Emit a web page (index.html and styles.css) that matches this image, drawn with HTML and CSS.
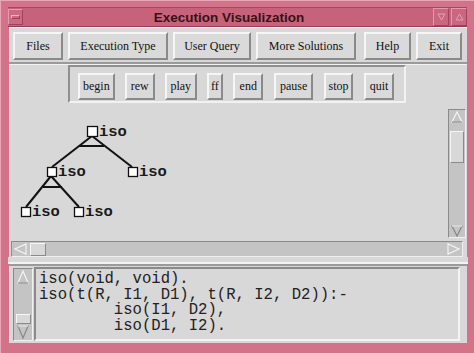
FILE: index.html
```html
<!DOCTYPE html>
<html>
<head>
<meta charset="utf-8">
<link rel="stylesheet" href="styles.css">
</head>
<body>
<div class="window">
  <div class="titlebar">
    <div class="sysbtn"><span class="sysbar"></span></div>
    <div class="title">Execution Visualization</div>
    <div class="tbtn"><svg width="9" height="8" viewBox="0 0 9 8"><path d="M1 1 L8 1 L4.5 7 Z" fill="none" stroke="#e6a0b2" stroke-width="1"/></svg></div>
    <div class="tbtn"><svg width="9" height="8" viewBox="0 0 9 8"><path d="M1 7 L8 7 L4.5 1 Z" fill="none" stroke="#e6a0b2" stroke-width="1"/></svg></div>
  </div>
  <div class="content">
    <div class="menubar">
      <button class="btn m-files">Files</button>
      <button class="btn m-exec">Execution Type</button>
      <button class="btn m-query">User Query</button>
      <button class="btn m-more">More Solutions</button>
      <button class="btn m-help">Help</button>
      <button class="btn m-exit">Exit</button>
    </div>
    <div class="sep"></div>
    <div class="controls">
      <button class="btn cb c-begin">begin</button>
      <button class="btn cb c-rew">rew</button>
      <button class="btn cb c-play">play</button>
      <button class="btn cb c-ff">ff</button>
      <button class="btn cb c-end">end</button>
      <button class="btn cb c-pause">pause</button>
      <button class="btn cb c-stop">stop</button>
      <button class="btn cb c-quit">quit</button>
    </div>
    <div class="canvasrow">
      <div class="canvas">
        <svg class="tree" width="200" height="120" viewBox="0 0 200 120">
          <g stroke="#111" stroke-width="2" fill="none">
            <line x1="82" y1="23" x2="42" y2="54"/>
            <line x1="82" y1="23" x2="122" y2="54"/>
            <line x1="69" y1="33" x2="94" y2="33"/>
            <line x1="41" y1="63" x2="16" y2="94"/>
            <line x1="41" y1="63" x2="69" y2="94"/>
            <line x1="33" y1="74" x2="52" y2="74"/>
          </g>
          <g fill="#fff" stroke="#111" stroke-width="1.3">
            <rect x="77.5" y="13.5" width="10" height="10"/>
            <rect x="37.5" y="54.5" width="9" height="9"/>
            <rect x="118.5" y="54.5" width="9" height="9"/>
            <rect x="11.5" y="94.5" width="9" height="9"/>
            <rect x="64.5" y="94.5" width="9" height="9"/>
          </g>
          <g class="tlabel">
            <text x="89" y="23">iso</text>
            <text x="48" y="63">iso</text>
            <text x="129" y="63">iso</text>
            <text x="22" y="103">iso</text>
            <text x="75" y="103">iso</text>
          </g>
        </svg>
      </div>
      <div class="vscroll">
        <div class="arrow"><svg width="14" height="12" viewBox="0 0 14 12"><path d="M2 11 L12 11 L7 1 Z" fill="none" stroke="#f4f4f4" stroke-width="1.2"/><path d="M2 11 L12 11" stroke="#888" stroke-width="1.2"/></svg></div>
        <div class="vthumb"></div>
        <div class="vfill"></div>
        <div class="arrow"><svg width="14" height="12" viewBox="0 0 14 12"><path d="M2 1 L12 1 L7 11 Z" fill="none" stroke="#888" stroke-width="1.2"/><path d="M2 1 L12 1" stroke="#f4f4f4" stroke-width="1.2"/></svg></div>
      </div>
    </div>
    <div class="hscroll">
      <div class="harrow"><svg width="14" height="12" viewBox="0 0 14 12"><path d="M13 1 L13 11 L2 6 Z" fill="none" stroke="#f4f4f4" stroke-width="1.2"/></svg></div>
      <div class="hthumb"></div>
      <div class="hfill"></div>
      <div class="harrow"><svg width="14" height="12" viewBox="0 0 14 12"><path d="M1 1 L1 11 L12 6 Z" fill="none" stroke="#f4f4f4" stroke-width="1.2"/></svg></div>
    </div>
    <div class="sep2"></div>
    <div class="bottom">
      <div class="lscroll">
        <div class="larrow"><svg width="14" height="14" viewBox="0 0 14 14"><path d="M2 13 L12 13 L7 1 Z" fill="none" stroke="#f4f4f4" stroke-width="1.2"/><path d="M2 13 L12 13" stroke="#888" stroke-width="1.2"/></svg></div>
        <div class="lfill"></div>
        <div class="lthumb"></div>
        <div class="larrow"><svg width="14" height="14" viewBox="0 0 14 14"><path d="M2 1 L12 1 L7 13 Z" fill="none" stroke="#888" stroke-width="1.2"/><path d="M2 1 L12 1" stroke="#f4f4f4" stroke-width="1.2"/></svg></div>
      </div>
      <pre class="code">iso(void, void).
iso(t(R, I1, D1), t(R, I2, D2)):-
        iso(I1, D2),
        iso(D1, I2).</pre>
    </div>
  </div>
</div>
</body>
</html>
```

FILE: styles.css
```css
* { box-sizing: border-box; }
html, body { margin: 0; padding: 0; }
body {
  width: 474px;
  height: 353px;
  background: #c9687f;
  overflow: hidden;
  font-family: "Liberation Serif", "Times New Roman", serif;
}
.window {
  width: 474px;
  height: 353px;
  padding: 6px 7px 10px 8px;
  background: #d27389;
  border-top: 1px solid #e9a6b6;
  border-left: 1px solid #e9a6b6;
  display: flex;
  flex-direction: column;
}
.titlebar {
  height: 20px;
  flex: 0 0 20px;
  display: flex;
  align-items: center;
  background: #c6637b;
  border-top: 1px solid #a44860;
  border-bottom: 1px solid #963c53;
  margin-left: -1px;
}
.sysbtn {
  width: 15px;
  height: 16px;
  border: 1px solid #e39aad;
  border-right-color: #a04259;
  border-bottom-color: #a04259;
  background: #cb6a82;
  display: flex;
  align-items: center;
  justify-content: center;
}
.sysbar {
  width: 9px;
  height: 4px;
  border: 1px solid #efb3c2;
  border-right-color: #9c3f56;
  border-bottom-color: #9c3f56;
}
.title {
  flex: 1;
  text-align: center;
  font-family: "Liberation Sans", Arial, sans-serif;
  font-weight: bold;
  font-size: 13.5px;
  color: #3a1118;
  padding-left: 4px;
}
.tbtn {
  width: 16px;
  height: 18px;
  margin-left: 2px;
  border: 1px solid #e39aad;
  border-right-color: #a04259;
  border-bottom-color: #a04259;
  background: #c96780;
  display: flex;
  align-items: center;
  justify-content: center;
}
.content {
  flex: 1;
  background: #d8d8d8;
  display: flex;
  flex-direction: column;
  border-top: 1px solid #f4f4f4;
}
.btn {
  font-family: "Liberation Serif", "Times New Roman", serif;
  font-size: 12px;
  color: #111;
  background: #dadada;
  border: 2px solid;
  border-color: #f6f6f6 #8a8a8a #8a8a8a #f6f6f6;
  padding: 0;
  margin: 0;
}
.menubar {
  display: flex;
  height: 29px;
  margin-top: 4px;
  padding-left: 4px;
}
.menubar .btn { height: 28px; margin-right: 5px; }
.m-files { width: 50px; }
.m-exec { width: 100px; }
.m-query { width: 78px; }
.m-more { width: 100px; margin-right: 8px !important; }
.m-help { width: 47px; }
.m-exit { width: 46px; }
.sep {
  height: 3px;
  margin-top: 1px;
  background: #9a9a9a;
  border-bottom: 1px solid #f2f2f2;
}
.controls {
  margin-left: 59px;
  width: 338px;
  height: 38px;
  border: 2px solid;
  border-color: #8f8f8f #f2f2f2 #f2f2f2 #8f8f8f;
  display: flex;
  align-items: flex-end;
  padding: 0 0 1px 8px;
}
.cb { height: 27px; margin-right: 10px; }
.c-begin { width: 38px; }
.c-rew { width: 31px; }
.c-play { width: 33px; }
.c-ff { width: 17px; }
.c-end { width: 31px; margin-right: 11px; }
.c-pause { width: 40px; margin-right: 11px; }
.c-stop { width: 30px; margin-right: 11px; }
.c-quit { width: 31px; }
.canvasrow {
  display: flex;
  height: 138px;
}
.canvas {
  flex: 1;
  position: relative;
}
.tree {
  position: absolute;
  left: 1px;
  top: 10px;
}
.tlabel text {
  font-family: "Liberation Mono", "Courier New", monospace;
  font-size: 15.5px;
  font-weight: bold;
  fill: #1a1a1a;
}
.vscroll {
  width: 18px;
  margin: 6px 1px 3px 0;
  background: #c4c4c4;
  border: 1px solid;
  border-color: #8a8a8a #f0f0f0 #f0f0f0 #8a8a8a;
  display: flex;
  flex-direction: column;
  align-items: center;
}
.arrow { height: 13px; display: flex; align-items: center; justify-content: center; }
.vthumb {
  width: 14px;
  height: 32px;
  margin-top: 8px;
  background: #d8d8d8;
  border: 1px solid;
  border-color: #f6f6f6 #8a8a8a #8a8a8a #f6f6f6;
}
.vfill { flex: 1; }
.hscroll {
  height: 16px;
  margin: 0 4px 0 2px;
  background: #c4c4c4;
  border: 1px solid;
  border-color: #8a8a8a #f0f0f0 #f0f0f0 #8a8a8a;
  display: flex;
  align-items: center;
}
.harrow { width: 16px; display: flex; align-items: center; justify-content: center; }
.hthumb {
  width: 16px;
  height: 13px;
  margin-left: 2px;
  background: #d8d8d8;
  border: 1px solid;
  border-color: #f6f6f6 #8a8a8a #8a8a8a #f6f6f6;
}
.hfill { flex: 1; }
.sep2 {
  height: 7px;
  border-bottom: 2px solid #f2f2f2;
  background: #d8d8d8;
  margin: 0 -1px;
}
.bottom {
  flex: 1;
  display: flex;
  padding: 3px 7px 2px 3px;
  background: linear-gradient(#9a9a9a, #9a9a9a) top/100% 2px no-repeat, #d8d8d8;
}
.lscroll {
  width: 20px;
  margin: 1px 1px 0 1px;
  background: #c4c4c4;
  border: 1px solid;
  border-color: #8a8a8a #f0f0f0 #f0f0f0 #8a8a8a;
  display: flex;
  flex-direction: column;
  align-items: center;
}
.larrow { height: 16px; display: flex; align-items: center; justify-content: center; }
.lfill { flex: 1; }
.lthumb {
  width: 15px;
  height: 10px;
  background: #d8d8d8;
  border: 1px solid;
  border-color: #f6f6f6 #8a8a8a #8a8a8a #f6f6f6;
}
.code {
  flex: 1;
  margin: 0;
  padding: 3px 0 0 3px;
  border: 2px solid;
  border-color: #8a8a8a #f4f4f4 #f4f4f4 #8a8a8a;
  font-family: "Liberation Mono", "Courier New", monospace;
  font-size: 15.6px;
  line-height: 15.5px;
  color: #222;
}
```
